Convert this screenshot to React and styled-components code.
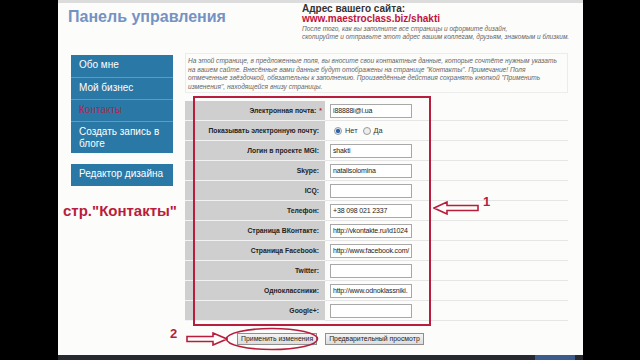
import React from "react";
import styled, { createGlobalStyle } from "styled-components";

const GlobalStyle = createGlobalStyle`
  html, body { margin: 0; padding: 0; background: #000; }
  body { font-family: "Liberation Sans", Arial, sans-serif; }
`;

const rows = [
  { label: "Электронная почта:", value: "i88888i@i.ua", required: true },
  { label: "Показывать электронную почту:", radio: true },
  { label: "Логин в проекте MGI:", value: "shakti" },
  { label: "Skype:", value: "natalisolomina" },
  { label: "ICQ:", value: "" },
  { label: "Телефон:", value: "+38 098 021 2337" },
  { label: "Страница ВКонтакте:", value: "http://vkontakte.ru/id1024" },
  { label: "Страница Facebook:", value: "http://www.facebook.com/" },
  { label: "Twitter:", value: "" },
  { label: "Одноклассники:", value: "http://www.odnoklassniki." },
  { label: "Google+:", value: "" },
];

const menu = [
  { title: "Обо мне" },
  { title: "Мой бизнес" },
  { title: "Контакты", active: true },
  { title: "Создать запись в блоге" },
];

const App = () => {
  return (
    <Screen>
      <GlobalStyle />
      <Page>
        <Header>
          <Title>Панель управления</Title>
          <Address>
            <AddressLabel>Адрес вашего сайта:</AddressLabel>
            <AddressLink>www.maestroclass.biz/shakti</AddressLink>
            <AddressNote>
              После того, как вы заполните все страницы и оформите дизайн,
              <br />
              скопируйте и отправьте этот адрес вашим коллегам, друзьям, знакомым и близким.
            </AddressNote>
          </Address>
        </Header>

        <Body>
          <Sidebar>
            <Menu>
              {menu.map((m) => (
                <MenuItem key={m.title} $active={m.active}>
                  {m.title}
                </MenuItem>
              ))}
            </Menu>
            <Menu>
              <MenuItem>Редактор дизайна</MenuItem>
            </Menu>
          </Sidebar>

          <Content>
            <Intro>
              На этой странице, в предложенные поля, вы вносите свои контактные данные, которые сочтёте нужным указать
              на вашем сайте. Внесённые вами данные будут отображены на странице "Контакты". Примечание! Поля
              отмеченные звёздочкой, обязательны к заполнению. Произведённые действия сохранять кнопкой "Применить
              изменения", находящейся внизу страницы.
            </Intro>

            <Form>
              {rows.map((r) => (
                <Row key={r.label}>
                  <Label>
                    {r.label}
                    {r.required && <Star>*</Star>}
                  </Label>
                  <Field>
                    {r.radio ? (
                      <Radios>
                        <Radio $checked /> Нет <Radio /> Да
                      </Radios>
                    ) : (
                      <Input>{r.value}</Input>
                    )}
                  </Field>
                </Row>
              ))}
              <RedFrame />
            </Form>

            <Buttons>
              <Button>Применить изменения</Button>
              <Button>Предварительный просмотр</Button>
            </Buttons>
          </Content>
        </Body>
      </Page>
      <BottomBar>
        <BarTab />
      </BottomBar>

      <PageNote>стр."Контакты"</PageNote>

      <Arrow1>
        <svg width="46" height="14" viewBox="0 0 46 14">
          <path
            d="M1 7 L14 1 L14 4.5 L45 4.5 L45 9.5 L14 9.5 L14 13 Z"
            fill="none"
            stroke="#b81d3d"
            strokeWidth="1.6"
          />
        </svg>
        <Num>1</Num>
      </Arrow1>

      <Arrow2>
        <Num>2</Num>
        <svg width="42" height="14" viewBox="0 0 42 14">
          <path
            d="M1 4.5 L27 4.5 L27 1 L41 7 L27 13 L27 9.5 L1 9.5 Z"
            fill="none"
            stroke="#b81d3d"
            strokeWidth="1.6"
          />
        </svg>
      </Arrow2>

      <Ellipse>
        <svg width="94" height="24" viewBox="0 0 94 24">
          <ellipse cx="47" cy="12" rx="45.5" ry="10.5" fill="none" stroke="#b81d3d" strokeWidth="1.6" />
        </svg>
      </Ellipse>
    </Screen>
  );
};

const Screen = styled.div`
  position: relative;
  width: 640px;
  height: 360px;
  background: #000;
  overflow: hidden;
`;

const Page = styled.div`
  margin-left: 58px;
  width: 525px;
  height: 355px;
  background: #fcfcfa;
  border-top: 3px solid #dcdcdc;
  box-sizing: border-box;
  display: flex;
  flex-direction: column;
`;

const Header = styled.div`
  display: flex;
  height: 50px;
`;

const Title = styled.h1`
  margin: 5px 0 0 10px;
  width: 234px;
  font-size: 16px;
  font-weight: bold;
  color: #7592c4;
`;

const Address = styled.div`
  padding-top: 1px;
`;

const AddressLabel = styled.div`
  font-size: 10px;
  font-weight: bold;
  color: #333;
  line-height: 10px;
`;

const AddressLink = styled.div`
  font-size: 10px;
  font-weight: bold;
  color: #c0143c;
  line-height: 10px;
`;

const AddressNote = styled.div`
  margin-top: 1px;
  font-size: 6.5px;
  font-style: italic;
  color: #666;
  line-height: 8px;
`;

const Body = styled.div`
  display: flex;
  gap: 12px;
  padding-left: 13px;
`;

const Sidebar = styled.div`
  width: 102px;
  display: flex;
  flex-direction: column;
  gap: 11px;
  padding-top: 2px;
`;

const Menu = styled.div`
  background: #2a78a6;
  display: flex;
  flex-direction: column;
`;

const MenuItem = styled.div`
  min-height: 22px;
  padding: 4px 8px 3px;
  box-sizing: border-box;
  font-size: 10px;
  line-height: 12px;
  color: ${(p) => (p.$active ? "#b3244e" : "#fff")};
  border-top: 1px solid #5d9cc2;
  &:first-child {
    border-top: none;
  }
`;

const Content = styled.div`
  width: 383px;
  display: flex;
  flex-direction: column;
`;

const Intro = styled.div`
  border: 1px solid #ececec;
  padding: 3px 4px 4px 2px;
  height: 40px;
  box-sizing: border-box;
  font-size: 6.6px;
  line-height: 8.7px;
  font-style: italic;
  color: #666;
`;

const Form = styled.div`
  position: relative;
  margin-top: 8px;
  display: flex;
  flex-direction: column;
`;

const Row = styled.div`
  display: grid;
  grid-template-columns: 140px 1fr;
  height: 20px;
  border-bottom: 1px solid #e6e6e6;
  box-sizing: border-box;
`;

const Label = styled.div`
  background: #cfcfcf;
  border-bottom: 1px solid #f2f2f2;
  margin-bottom: -1px;
  display: flex;
  align-items: center;
  justify-content: flex-end;
  padding-right: 6px;
  font-size: 6.8px;
  font-weight: bold;
  color: #222;
`;

const Star = styled.span`
  color: #c0143c;
  margin-left: 3px;
  margin-right: -3px;
`;

const Field = styled.div`
  display: flex;
  align-items: center;
  padding-left: 5px;
`;

const Input = styled.div`
  width: 82px;
  height: 14px;
  box-sizing: border-box;
  border: 1px solid #a8a8a8;
  background: #fff;
  padding: 0 1px 0 2px;
  font-size: 7px;
  letter-spacing: -0.15px;
  line-height: 12px;
  color: #222;
  white-space: nowrap;
  overflow: hidden;
`;

const Radios = styled.div`
  display: flex;
  align-items: center;
  gap: 3px;
  padding-left: 2px;
  font-size: 7.4px;
  color: #333;
`;

const Radio = styled.span`
  width: 6px;
  height: 6px;
  border-radius: 50%;
  border: 1px solid #999;
  background: ${(p) => (p.$checked ? "radial-gradient(circle, #2c64b0 45%, #dfe8f5 55%)" : "#eee")};
  margin-left: 2px;
`;

const RedFrame = styled.div`
  position: absolute;
  left: 8px;
  top: -5px;
  width: 238px;
  height: 230px;
  border: 2px solid #b81d3d;
  box-sizing: border-box;
  pointer-events: none;
`;

const Buttons = styled.div`
  display: flex;
  gap: 8px;
  padding-left: 52px;
  margin-top: 12px;
`;

const Button = styled.div`
  height: 12px;
  padding: 0 3px;
  box-sizing: border-box;
  border: 1px solid #8f8f8f;
  background: linear-gradient(#f4f4f4, #dcdcdc);
  font-size: 6.9px;
  line-height: 10px;
  color: #222;
`;

const BottomBar = styled.div`
  position: absolute;
  left: 58px;
  bottom: 0;
  width: 525px;
  height: 5px;
  background: #262a30;
  display: flex;
  justify-content: flex-end;
`;

const BarTab = styled.div`
  width: 40px;
  margin-right: 8px;
  background: #3b5b8c;
`;

const PageNote = styled.div`
  position: absolute;
  left: 63px;
  top: 202px;
  font-size: 15px;
  font-weight: bold;
  color: #b81d3d;
`;

const Arrow1 = styled.div`
  position: absolute;
  left: 433px;
  top: 195px;
  display: flex;
  align-items: flex-start;
  gap: 4px;
  svg {
    margin-top: 6px;
  }
`;

const Num = styled.span`
  font-size: 13px;
  font-weight: bold;
  color: #b81d3d;
  line-height: 14px;
`;

const Arrow2 = styled.div`
  position: absolute;
  left: 170px;
  top: 327px;
  display: flex;
  align-items: flex-start;
  gap: 9px;
  svg {
    margin-top: 5px;
  }
`;

const Ellipse = styled.div`
  position: absolute;
  left: 225px;
  top: 327px;
  line-height: 0;
`;

export default App;
